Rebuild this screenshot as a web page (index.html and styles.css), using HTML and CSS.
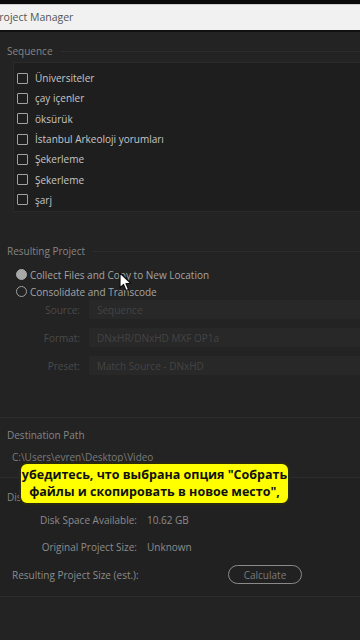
FILE: index.html
```html
<!DOCTYPE html>
<html lang="en">
<head>
  <meta charset="UTF-8" />
  <meta name="viewport" content="width=device-width, initial-scale=1" />
  <title>Project Manager</title>
  <link rel="stylesheet" href="styles.css">
</head>
<body>
  <div class="titlebar"><span class="title">Project Manager</span></div>

  <div class="section-head seq-head"><span>Sequence</span></div>
  <div class="seq-list">
    <div class="seq-item"><span class="box"></span>Üniversiteler</div>
    <div class="seq-item"><span class="box"></span>çay içenler</div>
    <div class="seq-item"><span class="box"></span>öksürük</div>
    <div class="seq-item"><span class="box"></span>İstanbul Arkeoloji yorumları</div>
    <div class="seq-item"><span class="box"></span>Şekerleme</div>
    <div class="seq-item"><span class="box"></span>Şekerleme</div>
    <div class="seq-item"><span class="box"></span>şarj</div>
  </div>

  <div class="section-head result-head"><span>Resulting Project</span></div>
  <div class="radio-row first"><span class="radio checked"></span>Collect Files and Copy to New Location</div>
  <div class="radio-row"><span class="radio"></span>Consolidate and Transcode</div>

  <div class="fields">
    <label>Source:</label><div class="field">Sequence</div>
    <label>Format:</label><div class="field">DNxHR/DNxHD MXF OP1a</div>
    <label>Preset:</label><div class="field">Match Source - DNxHD</div>
  </div>

  <div class="dest">
    <div class="section-head plain">Destination Path</div>
    <div class="path">C:\Users\evren\Desktop\Video</div>
  </div>

  <div class="disk">
    <div class="section-head plain">Disk Space</div>
    <div class="disk-grid">
      <span class="k">Disk Space Available:</span><span class="v">10.62 GB</span>
      <span class="k">Original Project Size:</span><span class="v">Unknown</span>
    </div>
    <div class="result-row">
      <span>Resulting Project Size (est.):</span>
      <button class="calc">Calculate</button>
    </div>
  </div>

  <div class="caption">убедитесь, что выбрана опция "Собрать<br>файлы и скопировать в новое место",</div>

  <svg class="cursor" width="14" height="20" viewBox="0 0 14 20">
    <path d="M1 1 L1 16 L4.5 12.5 L7 18.5 L9.5 17.5 L7 11.5 L12 11.5 Z" fill="#fff" stroke="#111" stroke-width="1.2" stroke-linejoin="round"/>
  </svg>
</body>
</html>
```

FILE: styles.css
```css
body {
  margin: 0;
  width: 360px;
  height: 640px;
  overflow: hidden;
  position: relative;
  background: #232323;
  font-family: 'Open Sans', 'Noto Sans', sans-serif;
  font-size: 10px;
  line-height: 14px;
  color: #8a8a8a;
}

.titlebar {
  height: 26px;
  border-top: 4px solid #0a0a0a;
  border-bottom: 2px solid #111;
  background: #f1f1f1;
  box-shadow: inset 0 1px 0 #cfcfcf;
  display: flex;
  align-items: center;
  overflow: hidden;
}

.title {
  margin-left: -7px;
  font-size: 10.5px;
  color: #555;
  white-space: nowrap;
}

.section-head {
  display: flex;
  align-items: center;
  gap: 8px;
  padding-left: 7px;
  height: 20px;
  color: #858585;
}

.section-head::after {
  content: '';
  flex: 1;
  height: 1px;
  background: #2c2c2c;
}

.section-head.plain::after {
  display: none;
}

.seq-head {
  margin-top: 9px;
}

.seq-list {
  margin: 1px 0 0 13px;
  height: 143px;
  padding-top: 5px;
  background: #1e1e1e;
  border: 1px solid #2a2a2a;
  border-right: none;
}

.seq-item {
  height: 20.3px;
  display: flex;
  align-items: center;
  gap: 7px;
  padding-left: 3px;
  color: #c6c6c6;
}

.box {
  width: 9px;
  height: 9px;
  border: 1.5px solid #a2a2a2;
  border-radius: 1px;
}

.result-head {
  margin-top: 29px;
}

.radio-row {
  display: flex;
  align-items: center;
  gap: 3px;
  height: 17px;
  padding-left: 16px;
  color: #a3a3a3;
}

.radio-row.first {
  margin-top: 5px;
}

.radio {
  width: 9px;
  height: 9px;
  border: 1.5px solid #a0a0a0;
  border-radius: 50%;
}

.radio.checked {
  background: #a8a8a8;
  border-color: #a8a8a8;
}

.fields {
  display: grid;
  grid-template-columns: 73px 1fr;
  column-gap: 9px;
  row-gap: 9px;
  padding-left: 7px;
  margin-top: 0;
}

.fields label {
  text-align: right;
  align-self: center;
  color: #4a4a4a;
}

.field {
  height: 19px;
  display: flex;
  align-items: center;
  padding-left: 8px;
  background: #282828;
  color: #444;
}

.dest {
  margin-top: 42px;
  border-top: 1px solid #2c2c2c;
  border-bottom: 1px solid #2c2c2c;
  padding-top: 7px;
  height: 52px;
}

.path {
  padding-left: 12px;
  margin-top: 5px;
  color: #7a7a7a;
}

.disk {
  padding-top: 9px;
  height: 109px;
  border-bottom: 1px solid #2c2c2c;
  background: #212121;
}

.disk-grid {
  display: grid;
  grid-template-columns: 137px 1fr;
  column-gap: 10px;
  row-gap: 13px;
  margin-top: 6px;
}

.disk-grid .k {
  text-align: right;
  color: #8c8c8c;
}

.disk-grid .v {
  color: #8c8c8c;
}

.result-row {
  display: flex;
  align-items: center;
  justify-content: space-between;
  width: 290px;
  padding-left: 12px;
  margin-top: 11px;
  color: #8c8c8c;
}

.calc {
  width: 74px;
  height: 19px;
  border: 1.5px solid #8a8a8a;
  border-radius: 10px;
  background: transparent;
  color: #7c7c7c;
  font-family: 'Open Sans', 'Noto Sans', sans-serif;
  font-size: 10px;
  padding: 0;
}

.caption {
  position: absolute;
  left: 19px;
  top: 462px;
  width: 267px;
  height: 37px;
  padding-top: 2px;
  background: #ffff00;
  border: 2px solid #2a2a10;
  border-radius: 8px;
  color: #111;
  font-family: 'Open Sans', 'Noto Sans', sans-serif;
  font-weight: bold;
  font-size: 12.5px;
  line-height: 17px;
  text-align: center;
}

.cursor {
  position: absolute;
  left: 119px;
  top: 272px;
}
```
